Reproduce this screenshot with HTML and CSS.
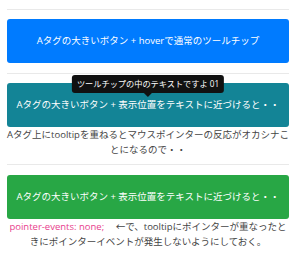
FILE: index.html
```html
<!DOCTYPE html>
<html lang="ja">
<head>
    <meta charset="UTF-8">
    <meta name="viewport" content="width=device-width, initial-scale=1.0">
    <title>tooltip sample</title>
    <link rel="stylesheet" href="styles.css">
</head>
<body>
    <div class="container">
        <hr>
        <a class="btn btn-primary" href="#">Aタグの大きいボタン + hoverで通常のツールチップ</a>
        <hr>
        <div class="tip-wrap">
            <a class="btn btn-info" href="#">Aタグの大きいボタン + 表示位置をテキストに近づけると・・</a>
            <div class="tooltip">ツールチップの中のテキストですよ 01</div>
        </div>
        <p class="note">Aタグ上にtooltipを重ねるとマウスポインターの反応がオカシナことになるので・・</p>
        <hr class="hr-gap">
        <a class="btn btn-success" href="#">Aタグの大きいボタン + 表示位置をテキストに近づけると・・</a>
        <p class="note"><code>pointer-events: none;</code>　←で、tooltipにポインターが重なったときにポインターイベントが発生しないようにしておく。</p>
    </div>
</body>
</html>
```

FILE: styles.css
```css
body {
    margin: 0;
    padding: 0;
    background: #fff;
    font-family: "Open Sans", "Noto Sans CJK JP", sans-serif;
    font-size: 9.5px;
    color: #444;
}
.container {
    width: 282px;
    padding: 9px 11px 0 7px;
}
hr {
    margin: 0 0 9px;
    border: none;
    border-top: 1px solid #e9e9e9;
}
.btn {
    display: flex;
    align-items: center;
    justify-content: center;
    height: 44px;
    margin-bottom: 10px;
    border-radius: 3px;
    color: #fff;
    text-decoration: none;
    line-height: 1;
}
.btn-primary {
    background: #007bff;
}
.btn-info {
    background: #138496;
    margin-bottom: 0;
}
.btn-success {
    background: #28a745;
    margin-bottom: 0;
}
.tip-wrap {
    position: relative;
}
.tooltip {
    position: absolute;
    top: -8px;
    left: 50%;
    transform: translateX(-50%);
    white-space: nowrap;
    padding: 0 5px;
    height: 18px;
    line-height: 18px;
    font-size: 8.2px;
    color: #fff;
    background: #111;
    border-radius: 3px;
}
.tooltip::after {
    content: "";
    position: absolute;
    left: 50%;
    bottom: -4px;
    margin-left: -4px;
    border-style: solid;
    border-width: 4px 4px 0;
    border-color: #111 transparent transparent;
}
.note {
    margin: 0 -1px;
    text-align: center;
    line-height: 15px;
}
.hr-gap {
    margin-top: 7px;
    margin-bottom: 10px;
}
.note code {
    font-family: "Open Sans", sans-serif;
    color: #e83e8c;
    margin-right: 2px;
}
```
